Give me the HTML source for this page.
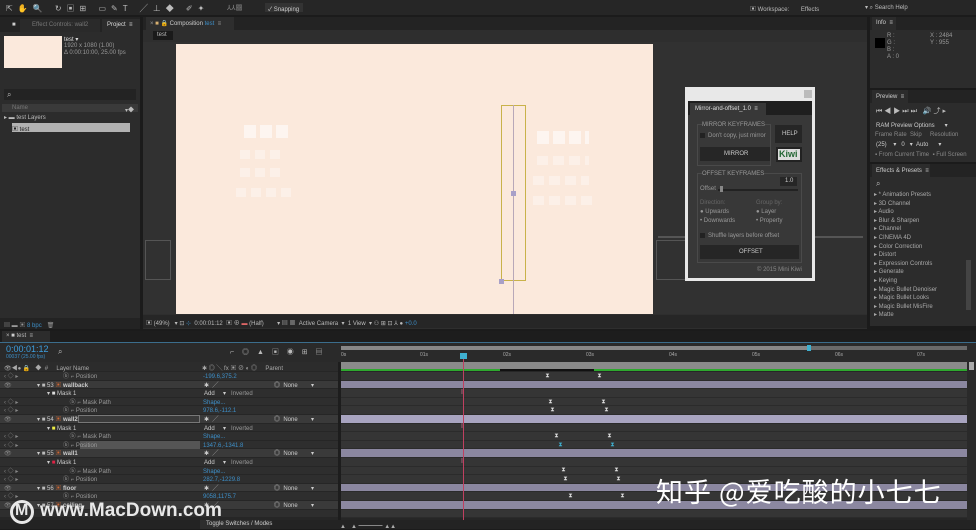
<!DOCTYPE html>
<html><head><meta charset="utf-8">
<style>
*{margin:0;padding:0;box-sizing:border-box}
body{width:976px;height:529px;overflow:hidden;background:#1b1b1b;font-family:"Liberation Sans","Noto Sans CJK SC",sans-serif;font-size:6px;color:#a8a8a8;position:relative}
.a{position:absolute}
.p{position:absolute;background:#2c2c2c}
.t{position:absolute;white-space:nowrap}
.row{position:absolute;left:0;width:338px;height:8.6px;background:#2e2e2e;border-bottom:1px solid #262626}
.lay{background:#3a3a3a}
.trow{position:absolute;left:341px;width:626px;height:8.6px;background:#353535;border-bottom:1px solid #2b2b2b}
.bar{background:#8b87a0}
.kf{position:absolute;width:5px;height:5px;color:#ddd;font-size:6px;line-height:5px;text-align:center}
.blue{color:#3d8fc8}
</style></head><body>

<div class="a" style="left:0;top:0;width:976px;height:15px;background:#262626"></div>
<div class="t" style="left:6px;top:3px;color:#bbb;font-size:8px;letter-spacing:5px">⇱✋🔍 ↻▣⊞ ▭✎T ╱⊥◆ ✐✦</div>
<div class="t" style="left:227px;top:3px;color:#888;font-size:7px">⅄⅄▩</div>
<div class="a" style="left:265px;top:3px;width:38px;height:9px;background:#333"></div>
<div class="t" style="left:268px;top:4px;color:#ccc">✓ Snapping</div>
<div class="t" style="left:750px;top:4px;color:#bbb">▣ Workspace: <span style="margin-left:10px">Effects</span></div>
<div class="t" style="left:865px;top:4px;color:#bbb">▾ ⌕ Search Help</div>

<div class="p" style="left:0;top:17px;width:140px;height:312px"></div>
<div class="a" style="left:0;top:17px;width:140px;height:15px;background:#232323"></div>
<div class="a" style="left:20px;top:19px;width:80px;height:13px;background:#2a2a2a"></div>
<div class="t" style="left:12px;top:22px;color:#ccc">■</div>
<div class="t" style="left:32px;top:22px;color:#777">Effect Controls: wall2</div>
<div class="a" style="left:102px;top:19px;width:38px;height:13px;background:#2c2c2c"></div>
<div class="t" style="left:107px;top:22px;color:#ddd">Project &nbsp;≡</div>
<div class="a" style="left:4px;top:36px;width:58px;height:32px;background:#fbe9dc"></div>
<div class="t" style="left:64px;top:36px;color:#ddd">test ▾</div>
<div class="t" style="left:64px;top:43px;color:#999;line-height:6.5px">1920 x 1080 (1.00)<br>Δ 0:00:10:00, 25.00 fps</div>
<div class="a" style="left:4px;top:89px;width:132px;height:11px;background:#232323"></div>
<div class="t" style="left:7px;top:90px;color:#bbb;font-size:8px">⌕</div>
<div class="a" style="left:2px;top:104px;width:136px;height:8px;background:#3a3a3a"></div>
<div class="t" style="left:12px;top:105px;color:#777">Name</div>
<div class="t" style="left:125px;top:105px;color:#bbb">▾◆</div>
<div class="t" style="left:4px;top:114px;color:#bbb">▸ ▬ test Layers</div>
<div class="a" style="left:12px;top:123px;width:118px;height:9px;background:#b2b2b2"></div>
<div class="t" style="left:12px;top:124px;color:#222">▣ test</div>
<div class="a" style="left:0;top:318px;width:140px;height:11px;background:#232323"></div>
<div class="t" style="left:4px;top:320px;color:#999">▤ ▬ ▣ <span class="blue">8 bpc</span> &nbsp; 🗑</div>

<div class="p" style="left:143px;top:17px;width:724px;height:312px;background:#2e2e2e"></div>
<div class="a" style="left:143px;top:17px;width:724px;height:13px;background:#232323"></div>
<div class="a" style="left:146px;top:17px;width:88px;height:13px;background:#2e2e2e"></div>
<div class="t" style="left:150px;top:20px;color:#999">× <span style="color:#d8b070">■</span> 🔒 <span style="color:#ccc">Composition</span> <span class="blue">test</span> &nbsp;≡</div>
<div class="a" style="left:153px;top:31px;width:20px;height:9px;background:#1a1a1a"></div>
<div class="t" style="left:157px;top:32px;color:#bbb">test</div>
<div class="a" style="left:143px;top:42px;width:724px;height:272px;background:#313131"></div>
<div class="a" style="left:176px;top:44px;width:477px;height:270px;background:#fbe9dc"></div>
<div class="a" style="left:244px;top:125px;width:46px;height:13px;background:repeating-linear-gradient(90deg,#fdf5f0 0 12px,transparent 12px 16px)"></div>
<div class="a" style="left:240px;top:150px;width:44px;height:9px;background:repeating-linear-gradient(90deg,#fcf0e8 0 10px,transparent 10px 15px)"></div>
<div class="a" style="left:240px;top:168px;width:44px;height:9px;background:repeating-linear-gradient(90deg,#fcf0e8 0 10px,transparent 10px 15px)"></div>
<div class="a" style="left:236px;top:188px;width:56px;height:9px;background:repeating-linear-gradient(90deg,#fcf0e8 0 10px,transparent 10px 15px)"></div>
<div class="a" style="left:537px;top:131px;width:52px;height:13px;background:repeating-linear-gradient(90deg,#fdf5f0 0 12px,transparent 12px 16px)"></div>
<div class="a" style="left:537px;top:156px;width:52px;height:9px;background:repeating-linear-gradient(90deg,#fcf0e8 0 11px,transparent 11px 16px)"></div>
<div class="a" style="left:533px;top:176px;width:56px;height:9px;background:repeating-linear-gradient(90deg,#fcf0e8 0 11px,transparent 11px 16px)"></div>
<div class="a" style="left:533px;top:196px;width:60px;height:9px;background:repeating-linear-gradient(90deg,#fcf0e8 0 11px,transparent 11px 16px)"></div>
<div class="a" style="left:501px;top:105px;width:25px;height:176px;border:1px solid #c9b24a"></div>
<div class="a" style="left:513px;top:105px;width:1px;height:209px;background:#b8a8b8"></div>
<div class="a" style="left:511px;top:191px;width:5px;height:5px;background:#a8a0c8"></div>
<div class="a" style="left:499px;top:279px;width:5px;height:5px;background:#a8a0c8"></div>
<div class="a" style="left:145px;top:240px;width:26px;height:40px;border:1px solid #555"></div>
<div class="a" style="left:656px;top:240px;width:30px;height:40px;border:1px solid #555"></div>
<div class="a" style="left:658px;top:236px;width:27px;height:2px;background:#555"></div>
<div class="a" style="left:815px;top:236px;width:48px;height:2px;background:#555"></div>
<div class="a" style="left:143px;top:315px;width:724px;height:13px;background:#262626"></div>
<div class="t" style="left:146px;top:318px;color:#bbb">▣ (49%) &nbsp; ▾ ⊡ <span class="blue">⊹</span> &nbsp;0:00:01:12 &nbsp;▣ ⊕ <span style="color:#d66">▬</span> (Half) &nbsp; &nbsp; &nbsp; &nbsp;▾ ▤ ▦ &nbsp;Active Camera &nbsp;▾ &nbsp;1 View &nbsp;▾ ⚇ ⊞ ⊡ ⅄ ● <span class="blue">+0.0</span></div>

<div class="a" style="left:685px;top:87px;width:130px;height:194px;background:#e8e8e8"></div>
<div class="a" style="left:688px;top:101px;width:124px;height:177px;background:#383838"></div>
<div class="a" style="left:804px;top:90px;width:8px;height:8px;background:#bbb"></div>
<div class="a" style="left:688px;top:101px;width:124px;height:14px;background:#1f1f1f"></div>
<div class="a" style="left:690px;top:103px;width:76px;height:12px;background:#383838"></div>
<div class="t" style="left:695px;top:106px;color:#ddd">Mirror-and-offset_1.0 &nbsp;≡</div>
<div class="a" style="left:697px;top:124px;width:74px;height:42px;border:1px solid #4a4a4a"></div>
<div class="t" style="left:702px;top:122px;color:#999;background:#383838">MIRROR KEYFRAMES</div>
<div class="a" style="left:700px;top:133px;width:5px;height:5px;background:#222"></div>
<div class="t" style="left:708px;top:133px;color:#999">Don't copy, just mirror</div>
<div class="a" style="left:700px;top:147px;width:70px;height:14px;background:#262626"></div>
<div class="t" style="left:724px;top:151px;color:#ccc">MIRROR</div>
<div class="a" style="left:775px;top:125px;width:27px;height:18px;background:#262626"></div>
<div class="t" style="left:782px;top:131px;color:#ccc">HELP</div>
<div class="a" style="left:776px;top:147px;width:26px;height:15px;background:#222;border:1px solid #222"></div>
<div class="a" style="left:778px;top:149px;width:22px;height:11px;background:#ddd"></div>
<div class="t" style="left:779px;top:149px;color:#263;font-size:9px;font-weight:bold">Kiwi</div>
<div class="a" style="left:697px;top:173px;width:105px;height:90px;border:1px solid #4a4a4a"></div>
<div class="t" style="left:702px;top:171px;color:#999;background:#383838">OFFSET KEYFRAMES</div>
<div class="a" style="left:780px;top:177px;width:17px;height:9px;background:#262626"></div>
<div class="t" style="left:785px;top:178px;color:#ccc">1.0</div>
<div class="t" style="left:700px;top:186px;color:#999">Offset</div>
<div class="a" style="left:718px;top:189px;width:80px;height:2px;background:#222"></div>
<div class="a" style="left:720px;top:186px;width:3px;height:6px;background:#888"></div>
<div class="t" style="left:700px;top:200px;color:#666">Direction:</div>
<div class="t" style="left:756px;top:200px;color:#666">Group by:</div>
<div class="t" style="left:700px;top:209px;color:#999">● Upwards</div>
<div class="t" style="left:700px;top:218px;color:#999">• Downwards</div>
<div class="t" style="left:756px;top:209px;color:#999">● Layer</div>
<div class="t" style="left:756px;top:218px;color:#999">• Property</div>
<div class="a" style="left:700px;top:233px;width:5px;height:5px;background:#222"></div>
<div class="t" style="left:708px;top:233px;color:#999">Shuffle layers before offset</div>
<div class="a" style="left:700px;top:245px;width:99px;height:14px;background:#262626"></div>
<div class="t" style="left:739px;top:249px;color:#ccc">OFFSET</div>
<div class="t" style="left:757px;top:267px;color:#888">© 2015 Mini Kiwi</div>

<div class="p" style="left:870px;top:17px;width:106px;height:71px"></div>
<div class="a" style="left:870px;top:17px;width:106px;height:13px;background:#232323"></div>
<div class="a" style="left:872px;top:17px;width:24px;height:13px;background:#2c2c2c"></div>
<div class="t" style="left:876px;top:20px;color:#ccc">Info &nbsp;≡</div>
<div class="a" style="left:875px;top:38px;width:10px;height:10px;background:#000"></div>
<div class="t" style="left:887px;top:33px;color:#999;line-height:7px">R :<br>G :<br>B :<br>A : 0</div>
<div class="t" style="left:930px;top:33px;color:#999;line-height:7px">X : 2484<br>Y : 955</div>
<div class="p" style="left:870px;top:90px;width:106px;height:72px"></div>
<div class="a" style="left:870px;top:90px;width:106px;height:13px;background:#232323"></div>
<div class="a" style="left:872px;top:90px;width:36px;height:13px;background:#2c2c2c"></div>
<div class="t" style="left:876px;top:94px;color:#ccc">Preview &nbsp;≡</div>
<div class="t" style="left:876px;top:106px;color:#bbb;font-size:7px;letter-spacing:2px">⏮◀▶⏭⏭ 🔊⤴▸</div>
<div class="t" style="left:876px;top:122px;color:#ccc">RAM Preview Options &nbsp; &nbsp; &nbsp;▾</div>
<div class="t" style="left:875px;top:132px;color:#888">Frame Rate &nbsp;Skip &nbsp; &nbsp; Resolution</div>
<div class="t" style="left:876px;top:141px;color:#ccc">(25) &nbsp; &nbsp;▾ &nbsp; 0 &nbsp; ▾ &nbsp;Auto &nbsp; &nbsp; &nbsp;▾</div>
<div class="t" style="left:875px;top:152px;color:#888">▪ From Current Time &nbsp;▪ Full Screen</div>
<div class="p" style="left:870px;top:164px;width:106px;height:162px"></div>
<div class="a" style="left:870px;top:164px;width:106px;height:13px;background:#232323"></div>
<div class="a" style="left:872px;top:164px;width:58px;height:13px;background:#2c2c2c"></div>
<div class="t" style="left:876px;top:168px;color:#ccc">Effects &amp; Presets &nbsp;≡</div>
<div class="t" style="left:876px;top:179px;color:#bbb;font-size:8px">⌕</div>
<div class="t" style="left:874px;top:191px;color:#aaa;line-height:8.6px">▸ * Animation Presets<br>▸ 3D Channel<br>▸ Audio<br>▸ Blur &amp; Sharpen<br>▸ Channel<br>▸ CINEMA 4D<br>▸ Color Correction<br>▸ Distort<br>▸ Expression Controls<br>▸ Generate<br>▸ Keying<br>▸ Magic Bullet Denoiser<br>▸ Magic Bullet Looks<br>▸ Magic Bullet MisFire<br>▸ Matte</div>
<div class="a" style="left:966px;top:260px;width:5px;height:50px;background:#444"></div>

<div class="a" style="left:0;top:331px;width:976px;height:198px;background:#262626"></div>
<div class="a" style="left:0;top:331px;width:976px;height:11px;background:#1d1d1d"></div>
<div class="a" style="left:2px;top:331px;width:48px;height:11px;background:#2c2c2c"></div>
<div class="t" style="left:6px;top:333px;color:#bbb">× <span style="color:#ccc">■</span> test &nbsp;≡</div>
<div class="a" style="left:0;top:342px;width:976px;height:20px;background:#2a2a2a;border-top:1px solid #3b6d8c"></div>
<div class="t" style="left:6px;top:344px;color:#3d9fe0;font-size:9px">0:00:01:12</div>
<div class="t" style="left:6px;top:354px;color:#3d8fc8;font-size:5px">00037 (25.00 fps)</div>
<div class="t" style="left:58px;top:347px;color:#bbb;font-size:8px">⌕</div>
<div class="t" style="left:230px;top:347px;color:#bbb;font-size:7px;letter-spacing:3px">⌐ ◎ ▲ ▣ ◉ ⊞ ▤</div>
<div class="a" style="left:0;top:362px;width:340px;height:9px;background:#2c2c2c"></div>
<div class="t" style="left:4px;top:363px;color:#aaa">👁◀● 🔒 &nbsp; ◆ &nbsp;# &nbsp; &nbsp; Layer Name</div>
<div class="t" style="left:202px;top:363px;color:#aaa">✱ ◎ ╲ fx ▣ ⊘ ◐ ◎ &nbsp; &nbsp; Parent</div>

<div class="a" style="left:341px;top:346px;width:626px;height:4px;background:#6a6a6a"></div>
<div class="a" style="left:341px;top:346px;width:468px;height:4px;background:#888"></div>
<div class="a" style="left:807px;top:345px;width:4px;height:6px;background:#3fb0d0"></div>
<div class="t" style="left:341px;top:352px;color:#aaa;font-size:5px">0s</div>
<div class="t" style="left:420px;top:352px;color:#aaa;font-size:5px">01s</div>
<div class="t" style="left:503px;top:352px;color:#aaa;font-size:5px">02s</div>
<div class="t" style="left:586px;top:352px;color:#aaa;font-size:5px">03s</div>
<div class="t" style="left:669px;top:352px;color:#aaa;font-size:5px">04s</div>
<div class="t" style="left:752px;top:352px;color:#aaa;font-size:5px">05s</div>
<div class="t" style="left:835px;top:352px;color:#aaa;font-size:5px">06s</div>
<div class="t" style="left:917px;top:352px;color:#aaa;font-size:5px">07s</div>
<div class="a" style="left:341px;top:362px;width:626px;height:8px;background:#8a8a8a"></div>
<div class="a" style="left:341px;top:369px;width:626px;height:2px;background:#2ea82e"></div>
<div class="a" style="left:500px;top:369px;width:94px;height:2px;background:#111"></div>

<div class="row" style="top:372px"></div>
<div class="row lay" style="top:380.6px"></div>
<div class="row" style="top:389.2px"></div>
<div class="row" style="top:397.8px"></div>
<div class="row" style="top:406.4px"></div>
<div class="row lay" style="top:415px"></div>
<div class="row" style="top:423.6px"></div>
<div class="row" style="top:432.2px"></div>
<div class="row" style="top:440.8px"></div>
<div class="row lay" style="top:449.4px"></div>
<div class="row" style="top:458px"></div>
<div class="row" style="top:466.6px"></div>
<div class="row" style="top:475.2px"></div>
<div class="row lay" style="top:483.8px"></div>
<div class="row" style="top:492.4px"></div>
<div class="row lay" style="top:501px"></div>
<div class="row" style="top:509.6px"></div>
<div class="trow" style="top:372px"></div>
<div class="trow bar" style="top:380.6px"></div>
<div class="trow" style="top:389.2px"></div>
<div class="trow" style="top:397.8px"></div>
<div class="trow" style="top:406.4px"></div>
<div class="trow bar" style="top:415px;background:#a8a4c0"></div>
<div class="trow" style="top:423.6px"></div>
<div class="trow" style="top:432.2px"></div>
<div class="trow" style="top:440.8px"></div>
<div class="trow bar" style="top:449.4px"></div>
<div class="trow" style="top:458px"></div>
<div class="trow" style="top:466.6px"></div>
<div class="trow" style="top:475.2px"></div>
<div class="trow bar" style="top:483.8px"></div>
<div class="trow" style="top:492.4px"></div>
<div class="trow bar" style="top:501px"></div>
<div class="trow" style="top:509.6px"></div>
<div class="a" style="left:967px;top:362px;width:9px;height:158px;background:#2a2a2a"></div>
<div class="a" style="left:969px;top:362px;width:5px;height:8px;background:#aaa"></div>
<div class="a" style="left:338px;top:362px;width:3px;height:158px;background:#1d1d1d"></div>

<div class="t" style="left:4px;top:373px;line-height:8.6px;color:#888">‹ ◇ ▸<br>👁<br><br>‹ ◇ ▸<br>‹ ◇ ▸<br>👁<br><br>‹ ◇ ▸<br>‹ ◇ ▸<br>👁<br><br>‹ ◇ ▸<br>‹ ◇ ▸<br>👁<br>‹ ◇ ▸<br>👁</div>
<div class="t" style="left:37px;top:373px;line-height:8.6px;color:#ccc"><br>▾ <span style="color:#bbb">■</span> 53 <span style="color:#c63">▣</span> <b>wallback</b><br>&nbsp; &nbsp; &nbsp; ▾ <span style="color:#ddd">■</span> Mask 1<br><br><br>▾ <span style="color:#bbb">■</span> 54 <span style="color:#c63">▣</span> <b>wall2</b><br>&nbsp; &nbsp; &nbsp; ▾ <span style="color:#ee4">■</span> Mask 1<br><br><br>▾ <span style="color:#bbb">■</span> 55 <span style="color:#c63">▣</span> <b>wall1</b><br>&nbsp; &nbsp; &nbsp; ▾ <span style="color:#d24">■</span> Mask 1<br><br><br>▾ <span style="color:#bbb">■</span> 56 <span style="color:#c63">▣</span> <b>floor</b><br><br>▾ <span style="color:#bbb">■</span> 57 <span style="color:#c63">▣</span> <b>ceiling</b></div>
<div class="a" style="left:78px;top:415px;width:122px;height:8px;border:1px solid #777"></div>
<div class="a" style="left:80px;top:441px;width:120px;height:8px;background:#555"></div>
<div class="t" style="left:63px;top:373px;line-height:8.6px;color:#999">ⓑ ⌐ Position<br><br><br>&nbsp; &nbsp; ⓑ ⌐ Mask Path<br>ⓑ ⌐ Position<br><br><br>&nbsp; &nbsp; ⓑ ⌐ Mask Path<br>ⓑ ⌐ Position<br><br><br>&nbsp; &nbsp; ⓑ ⌐ Mask Path<br>ⓑ ⌐ Position<br><br>ⓑ ⌐ Position</div>
<div class="t blue" style="left:203px;top:373px;line-height:8.6px">-199.6,375.2<br><br><br>Shape...<br>978.6,-112.1<br><br><br>Shape...<br>1347.6,-1341.8<br><br><br>Shape...<br>282.7,-1229.8<br><br>9058,1175.7</div>
<div class="t" style="left:204px;top:373px;line-height:8.6px;color:#ccc"><br>✱ &nbsp;╱<br>Add &nbsp; &nbsp; ▾ &nbsp; <span style="color:#999">Inverted</span><br><br><br>✱ &nbsp;╱<br>Add &nbsp; &nbsp; ▾ &nbsp; <span style="color:#999">Inverted</span><br><br><br>✱ &nbsp;╱<br>Add &nbsp; &nbsp; ▾ &nbsp; <span style="color:#999">Inverted</span><br><br><br>✱ &nbsp;╱<br><br>✱ &nbsp;╱</div>
<div class="t" style="left:274px;top:373px;line-height:8.6px;color:#ccc"><br>◎ &nbsp;None &nbsp; &nbsp; &nbsp; &nbsp;▾<br><br><br><br>◎ &nbsp;None &nbsp; &nbsp; &nbsp; &nbsp;▾<br><br><br><br>◎ &nbsp;None &nbsp; &nbsp; &nbsp; &nbsp;▾<br><br><br><br>◎ &nbsp;None &nbsp; &nbsp; &nbsp; &nbsp;▾<br><br>◎ &nbsp;None &nbsp; &nbsp; &nbsp; &nbsp;▾</div>

<div class="a" style="left:463px;top:356px;width:1px;height:164px;background:#c04060"></div>
<div class="a" style="left:460px;top:353px;width:7px;height:6px;background:#3fb0d0"></div>
<div class="t" style="left:461px;top:389px;color:#d07090;font-size:7px">I</div>
<div class="t" style="left:461px;top:423px;color:#d07090;font-size:7px">I</div>
<div class="t" style="left:461px;top:458px;color:#d07090;font-size:7px">I</div>
<div class="kf" style="left:545px;top:374px">⧗</div><div class="kf" style="left:597px;top:374px">⧗</div>
<div class="kf" style="left:548px;top:400px">⧗</div><div class="kf" style="left:601px;top:400px">⧗</div>
<div class="kf" style="left:550px;top:408px">⧗</div><div class="kf" style="left:604px;top:408px">⧗</div>
<div class="kf" style="left:554px;top:434px">⧗</div><div class="kf" style="left:607px;top:434px">⧗</div>
<div class="kf" style="left:558px;top:443px;color:#3fb0d0">⧗</div><div class="kf" style="left:610px;top:443px;color:#3fb0d0">⧗</div>
<div class="kf" style="left:561px;top:468px">⧗</div><div class="kf" style="left:614px;top:468px">⧗</div>
<div class="kf" style="left:563px;top:477px">⧗</div><div class="kf" style="left:616px;top:477px">⧗</div>
<div class="kf" style="left:568px;top:494px">⧗</div><div class="kf" style="left:620px;top:494px">⧗</div>

<div class="a" style="left:0;top:520px;width:976px;height:9px;background:#232323"></div>
<div class="a" style="left:200px;top:520px;width:70px;height:9px;background:#2e2e2e"></div>
<div class="t" style="left:206px;top:521px;color:#ccc">Toggle Switches / Modes</div>
<div class="t" style="left:340px;top:521px;color:#aaa">▲ &nbsp; ▲ ━━━━ ▲▲</div>

<div class="t" style="left:656px;top:471px;color:#fff;font-size:27px;letter-spacing:1px;font-family:'Noto Sans CJK SC',sans-serif">知乎 @爱吃酸的小七七</div>
<div class="a" style="left:10px;top:500px;width:24px;height:24px;border:3px solid #e8e8e8;border-radius:50%"></div>
<div class="t" style="left:15px;top:502px;color:#e8e8e8;font-size:16px;font-weight:bold">M</div>
<div class="t" style="left:40px;top:500px;color:#e8e8e8;font-size:19px;font-weight:bold">www.MacDown.com</div>
</body></html>
